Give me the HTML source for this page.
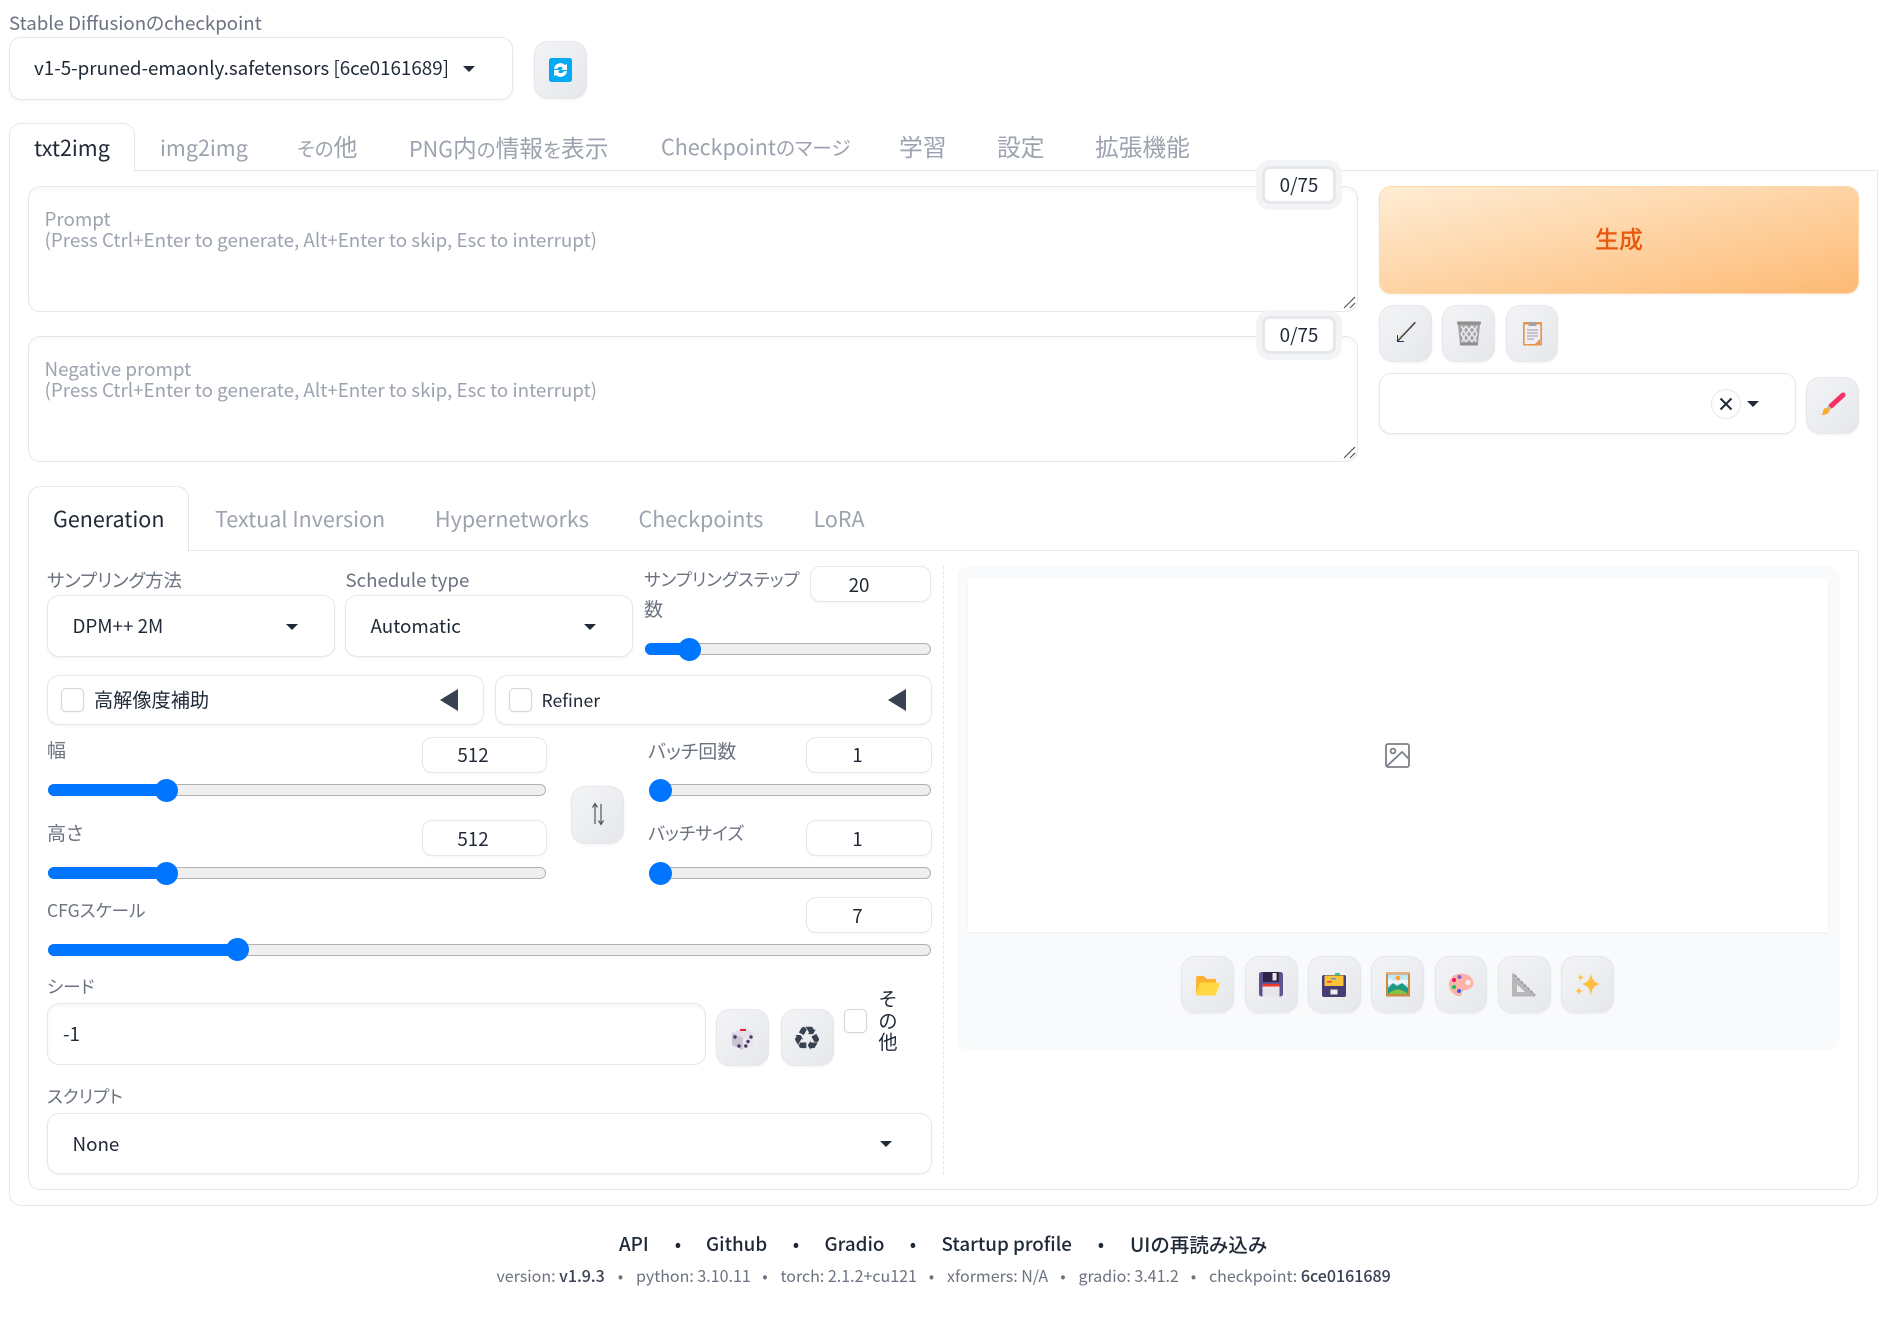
<!DOCTYPE html>
<html lang="ja"><head><meta charset="utf-8"><title>Stable Diffusion</title>
<style>
html,body{margin:0;padding:0;background:#fff}
body{position:relative;width:1884px;height:1323px;overflow:hidden;font-family:"Noto Sans CJK JP","Liberation Sans",sans-serif;color:#1f2937;font-feature-settings:"palt"}
.a{position:absolute;box-sizing:border-box}
.t{position:absolute;white-space:nowrap;line-height:24px;height:24px;font-size:18.8px}
.l{font-size:18.7px;color:#6b7280}
.tab{font-size:21.5px;color:#9ca3af}
.tab i{font-style:normal;font-size:23.7px}
.tab u{text-decoration:none;font-size:19.6px}
.ph{font-size:18.8px;color:#9ca3af;line-height:21.5px;height:auto}
.c{transform:translateX(-50%)}
.b{position:absolute;box-sizing:border-box;background:#fff;border:1.2px solid #e5e7eb;border-radius:12px;box-shadow:0 1px 2px rgba(0,0,0,.05)}
.n{position:absolute;box-sizing:border-box;background:#fff;border:1.2px solid #e5e7eb;border-radius:10px;box-shadow:0 1px 2px rgba(0,0,0,.04)}
.btn{position:absolute;box-sizing:border-box;background:linear-gradient(to bottom right,#f3f4f6,#e5e7eb);border:1.2px solid #e5e7eb;border-radius:14px;box-shadow:0 1px 2px rgba(0,0,0,.05)}
.tr{position:absolute;height:11.5px;box-sizing:border-box;background:#efefef;border:1.2px solid #b2b2b2;border-radius:6px}
.fi{position:absolute;height:11.5px;background:#0075ff;border-radius:6px 0 0 6px}
.th{position:absolute;width:23px;height:23px;background:#0075ff;border-radius:50%}
.ar{position:absolute;width:0;height:0;border-left:6px solid transparent;border-right:6px solid transparent;border-top:6.5px solid #1f2937}
.cb{position:absolute;box-sizing:border-box;background:#fff;border:1.2px solid #d1d5db;border-radius:5px;box-shadow:0 1px 2px rgba(0,0,0,.05)}
.tri{position:absolute;width:0;height:0;border-top:11px solid transparent;border-bottom:11px solid transparent;border-right:18px solid #374151}
svg{position:absolute;overflow:visible}
.cnt{position:absolute;box-sizing:border-box;background:#fff;border:3.6px solid #e5e7eb;border-radius:8px;box-shadow:0 0 0 6px #f3f4f6;text-align:center;font-size:18.8px;line-height:32px;color:#1f2937}
</style></head><body>

<div class="t l" style="left:9px;top:10.500px">Stable Diffusionのcheckpoint</div>
<div class="b" style="left:8.8px;top:37px;width:504.600px;height:63px"></div>
<div class="t" style="left:34px;top:55.500px">v1-5-pruned-emaonly.safetensors [6ce0161689]</div>
<div class="ar" style="left:463px;top:66px"></div>
<div class="btn" style="left:534px;top:41px;width:53px;height:58px"></div>
<svg style="left:549px;top:58px" width="23" height="24" viewBox="0 0 23 24"><rect width="23" height="24" rx="2.500" fill="#03a9f4"/><path d="M5 11a6.500 6.500 0 0 1 11-4l2-1v6h-6l2-2a3.700 3.700 0 0 0-6 1z" fill="#fff"/><path d="M18 13a6.500 6.500 0 0 1-11 4l-2 1v-6h6l-2 2a3.700 3.700 0 0 0 6-1z" fill="#fff"/></svg>

<!-- main tabs -->
<div class="a" style="left:8.600px;top:170.200px;width:1869px;height:1035.800px;border:1.200px solid #e5e7eb;border-radius:0 0 12px 12px"></div>
<div class="a" style="left:8.600px;top:123px;width:126px;height:49px;background:#fff;border:1.200px solid #e5e7eb;border-bottom:0;border-radius:12px 12px 0 0"></div>
<div class="t tab" style="left:34px;top:136px;color:#1f2937">txt2img</div>
<div class="t tab" style="left:160px;top:136px">img2img</div>
<div class="t tab" style="left:297px;top:134px"><u>その</u><i>他</i></div>
<div class="t tab" style="left:409px;top:135px">PNG<i>内</i><u>の</u><i>情報</i><u>を</u><i>表示</i></div>
<div class="t tab" style="left:661px;top:135px">Checkpoint<u>のマージ</u></div>
<div class="t tab" style="left:899px;top:134px"><i>学習</i></div>
<div class="t tab" style="left:997px;top:134px"><i>設定</i></div>
<div class="t tab" style="left:1095px;top:134px"><i>拡張機能</i></div>

<!-- prompts -->
<div class="b" style="left:28.200px;top:186px;width:1329.600px;height:126px;box-shadow:inset 0 3px 4px rgba(0,0,0,.03)"></div>
<div class="t ph" style="left:44.500px;top:207.500px">Prompt<br>(Press Ctrl+Enter to generate, Alt+Enter to skip, Esc to interrupt)</div>
<svg style="left:1343px;top:296px" width="14" height="14"><path d="M1 12L12 1M7 12l5-5" stroke="#555" stroke-width="1.200" fill="none"/></svg>
<div class="cnt" style="left:1262px;top:166px;width:74px;height:38px">0/75</div>

<div class="b" style="left:28.200px;top:336px;width:1329.600px;height:126px;box-shadow:inset 0 3px 4px rgba(0,0,0,.03)"></div>
<div class="t ph" style="left:44.500px;top:357.500px">Negative prompt<br>(Press Ctrl+Enter to generate, Alt+Enter to skip, Esc to interrupt)</div>
<svg style="left:1343px;top:446px" width="14" height="14"><path d="M1 12L12 1M7 12l5-5" stroke="#555" stroke-width="1.200" fill="none"/></svg>
<div class="cnt" style="left:1262px;top:316px;width:74px;height:38px">0/75</div>

<!-- generate -->
<div class="a" style="left:1379px;top:186px;width:480px;height:108px;border-radius:12px;background:linear-gradient(to bottom right,#ffedd5,#fdba74);border:1.200px solid #fed7aa;box-shadow:0 1px 2px rgba(0,0,0,.05)"></div>
<div class="t c" style="left:1619px;top:226px;font-size:24px;font-weight:500;color:#ea580c">生成</div>

<div class="btn" style="left:1379px;top:305px;width:53px;height:57px"></div>
<svg style="left:1393px;top:319px" width="26" height="26" viewBox="0 0 26 26"><path d="M22 3L4 22" stroke="#b87a3a" stroke-width="1.100"/><path d="M22.500 3.500L4.500 22.500M4.500 16V22.500h6.500" stroke="#1e3a5f" stroke-width="1" fill="none"/></svg>
<div class="btn" style="left:1442px;top:305px;width:53px;height:57px"></div>
<svg style="left:1457px;top:321px" width="24" height="25" viewBox="0 0 24 25"><path d="M1 2h22v2l-2 19H3L1 4z" fill="#a3a3a3"/><path d="M4 5l3 4-3 4 3 4-2 4M9 5L6 9l3 4-3 4 3 4M9 5l3 4-3 4 3 4-3 4M15 5l-3 4 3 4-3 4 3 4M15 5l3 4-3 4 3 4-3 4M20 5l-2 4 2 4-2 4 1 4" stroke="#e6e7ea" stroke-width="1.600" fill="none"/><rect x="0" y="0.500" width="24" height="3" fill="#8f8f8f" rx="1"/><rect x="3" y="21.500" width="18" height="3" fill="#8f8f8f" rx="1"/></svg>
<div class="btn" style="left:1506px;top:305px;width:52px;height:57px"></div>
<svg style="left:1523px;top:322px" width="19" height="24" viewBox="0 0 19 24"><rect width="19" height="23.500" rx="1" fill="#e8954a"/><rect x="1.700" y="2.500" width="15.600" height="19.500" fill="#f1edf4"/><path d="M4 8h11M4 11h11M4 14h11M4 17h7" stroke="#9b95a8" stroke-width="1"/><rect x="5.500" y="0" width="8" height="4" fill="#a3a3a3"/><path d="M12 22l5-5v5z" fill="#e8954a"/></svg>

<div class="b" style="left:1379px;top:373px;width:416.500px;height:60.500px"></div>
<div class="a" style="left:1711px;top:389px;width:30px;height:30px;border:1.200px solid #e5e7eb;border-radius:50%;background:#fff"></div>
<svg style="left:1719px;top:397px" width="14" height="14"><path d="M1.500 1.500l11 11M12.500 1.500l-11 11" stroke="#1f2937" stroke-width="2" fill="none"/></svg>
<div class="ar" style="left:1747px;top:401px"></div>
<div class="btn" style="left:1806px;top:377px;width:53px;height:57px"></div>
<svg style="left:1820px;top:392px" width="26" height="26" viewBox="0 0 26 26"><path d="M23 3L11 14" stroke="#f43064" stroke-width="5" stroke-linecap="round"/><path d="M10 15l-2 2" stroke="#c9b9a8" stroke-width="4"/><path d="M6 16c3 0 4 2 3 4-1 2-4 3-8 3 2-1 2-3 2-4s1-3 3-3z" fill="#f9ac2e"/></svg>

<!-- generation tabs -->
<div class="a" style="left:28px;top:550.300px;width:1830.500px;height:639.800px;border:1.200px solid #e5e7eb;border-radius:0 0 12px 12px"></div>
<div class="a" style="left:28px;top:486px;width:161px;height:65.500px;background:#fff;border:1.200px solid #e5e7eb;border-bottom:0;border-radius:12px 12px 0 0"></div>
<div class="t tab" style="left:53px;top:506.500px;color:#1f2937">Generation</div>
<div class="t tab" style="left:215px;top:506.500px">Textual Inversion</div>
<div class="t tab" style="left:435px;top:506.500px">Hypernetworks</div>
<div class="t tab" style="left:638.500px;top:506.500px">Checkpoints</div>
<div class="t tab" style="left:813.500px;top:506.500px">LoRA</div>

<div class="t l" style="left:47px;top:567.500px;font-size:18.400px">サンプリング方法</div>
<div class="t l" style="left:345.500px;top:568px">Schedule type</div>
<div class="b" style="left:46.700px;top:595px;width:288px;height:62px"></div>
<div class="b" style="left:345px;top:595px;width:288px;height:62px"></div>
<div class="t" style="left:72.500px;top:613.500px">DPM++ 2M</div>
<div class="t" style="left:370.500px;top:613.500px">Automatic</div>
<div class="ar" style="left:286px;top:624px"></div>
<div class="ar" style="left:584px;top:624px"></div>

<div class="t l" style="left:644px;top:567.500px;font-size:17.600px">サンプリングステップ</div>
<div class="t l" style="left:644px;top:597px;font-size:19px">数</div>
<div class="n" style="left:809.500px;top:566px;width:121.500px;height:35.500px"></div>
<div class="t c" style="left:859px;top:572.500px">20</div>
<div class="tr" style="left:645px;top:643.300px;width:285.500px"></div><div class="fi" style="left:645px;top:643.300px;width:44px"></div><div class="th" style="left:677.500px;top:637.500px"></div>

<div class="b" style="left:46.700px;top:675px;width:437px;height:50px"></div>
<div class="cb" style="left:60.500px;top:688px;width:23px;height:24px"></div>
<div class="t" style="left:94px;top:687px;font-size:19.200px">高解像度補助</div>
<div class="tri" style="left:440px;top:689px"></div>
<div class="b" style="left:495px;top:675px;width:437px;height:50px"></div>
<div class="cb" style="left:508.500px;top:688px;width:23px;height:24px"></div>
<div class="t" style="left:541.500px;top:688.500px;font-size:17.600px">Refiner</div>
<div class="tri" style="left:888px;top:689px"></div>

<div class="t l" style="left:47px;top:738px;font-size:19px">幅</div>
<div class="n" style="left:421.500px;top:737px;width:125px;height:35.500px"></div>
<div class="t c" style="left:473px;top:742.500px">512</div>
<div class="tr" style="left:48px;top:784.300px;width:498px"></div><div class="fi" style="left:48px;top:784.300px;width:119px"></div><div class="th" style="left:155px;top:778.500px"></div>

<div class="t l" style="left:47px;top:821px;font-size:19px">高さ</div>
<div class="n" style="left:421.500px;top:820px;width:125px;height:35.500px"></div>
<div class="t c" style="left:473px;top:826.500px">512</div>
<div class="tr" style="left:48px;top:867.300px;width:498px"></div><div class="fi" style="left:48px;top:867.300px;width:119px"></div><div class="th" style="left:155px;top:861.500px"></div>

<div class="btn" style="left:571px;top:786px;width:53px;height:58px"></div>
<svg style="left:589.500px;top:802px" width="16" height="24" viewBox="0 0 16 24"><path d="M5 22V2M2.500 5.500L5 1.500 7.500 5.500" stroke="#4a5a5a" stroke-width="1.200" fill="none"/><path d="M11 2v20M8.500 18.500l2.500 4 2.500-4" stroke="#4a5a5a" stroke-width="1.200" fill="none"/></svg>

<div class="t l" style="left:648px;top:738.500px;font-size:19px">バッチ回数</div>
<div class="n" style="left:805.500px;top:737px;width:126.500px;height:35.500px"></div>
<div class="t c" style="left:857.500px;top:742.500px">1</div>
<div class="tr" style="left:649px;top:784.300px;width:282px"></div><div class="fi" style="left:649px;top:784.300px;width:11px"></div><div class="th" style="left:648.500px;top:778.500px"></div>

<div class="t l" style="left:648px;top:821px;font-size:17.900px">バッチサイズ</div>
<div class="n" style="left:805.500px;top:820px;width:126.500px;height:35.500px"></div>
<div class="t c" style="left:857.500px;top:826.500px">1</div>
<div class="tr" style="left:649px;top:867.300px;width:282px"></div><div class="fi" style="left:649px;top:867.300px;width:11px"></div><div class="th" style="left:648.500px;top:861.500px"></div>

<div class="t l" style="left:47px;top:899px;font-size:17.500px">CFGスケール</div>
<div class="n" style="left:805.500px;top:897px;width:126.500px;height:35.500px"></div>
<div class="t c" style="left:857.500px;top:903.500px">7</div>
<div class="tr" style="left:48px;top:944px;width:883px"></div><div class="fi" style="left:48px;top:944px;width:190px"></div><div class="th" style="left:225.500px;top:938.200px"></div>

<div class="t l" style="left:47px;top:975px;font-size:17.600px">シード</div>
<div class="b" style="left:46.700px;top:1003px;width:659.500px;height:62px;box-shadow:inset 0 3px 4px rgba(0,0,0,.03)"></div>
<div class="t" style="left:63px;top:1022px">-1</div>
<div class="btn" style="left:716px;top:1009px;width:53px;height:57px"></div>
<svg style="left:731px;top:1027px" width="24" height="24" viewBox="0 0 24 24"><path d="M1 6l11-5 11 5v12l-11 5-11-5z" fill="#e3dfe8"/><path d="M12 11v12L1 18V6z" fill="#c9c3d2"/><path d="M12 11v12l11-5V6z" fill="#e8e5ec"/><path d="M9 3h6" stroke="#e8242e" stroke-width="2"/><circle cx="20" cy="10" r="1.700" fill="#433b69"/><circle cx="17" cy="14.500" r="1.700" fill="#433b69"/><circle cx="14.800" cy="19" r="1.700" fill="#433b69"/><circle cx="4" cy="10" r="1.700" fill="#433b69"/><circle cx="8" cy="19" r="1.700" fill="#433b69"/></svg>
<div class="btn" style="left:780.500px;top:1009px;width:53px;height:57px"></div>
<div class="a" style="left:780.500px;top:1020.500px;width:53px;height:36px;line-height:36px;text-align:center;font-family:'DejaVu Sans',sans-serif;font-size:33px;color:#374151;font-feature-settings:normal">♻&#xFE0E;</div>
<div class="cb" style="left:843.700px;top:1009px;width:23px;height:24px"></div>
<div class="t" style="left:878px;top:988px;width:20px;text-align:center;line-height:21.700px;height:auto;white-space:normal;color:#1f2937;font-size:19.200px;font-feature-settings:normal">その他</div>

<div class="t l" style="left:47px;top:1084.500px;font-size:17.600px">スクリプト</div>
<div class="b" style="left:46.700px;top:1113px;width:885px;height:61px"></div>
<div class="t" style="left:72.500px;top:1131.500px">None</div>
<div class="ar" style="left:880px;top:1141px"></div>

<!-- divider -->
<div class="a" style="left:943px;top:566px;width:0;height:608px;border-left:1.200px dashed #e5e7eb"></div>

<!-- gallery -->
<div class="a" style="left:956.500px;top:566px;width:883.500px;height:484.700px;background:#f9fafb;border-radius:12px"></div>
<div class="a" style="left:968px;top:578px;width:860px;height:354px;background:#fff;box-shadow:0 1px 2px rgba(0,0,0,.05)"></div>
<svg style="left:1385px;top:743px" width="25" height="25" viewBox="0 0 25 25" fill="none" stroke="#7b8088" stroke-width="1.800"><rect x="1" y="1" width="23" height="23" rx="2"/><circle cx="8" cy="8" r="2.400"/><path d="M2 23L17 9l7 7"/></svg>

<div class="btn" style="left:1181.300px;top:956px;width:52.500px;height:57px"></div>
<svg style="left:1196px;top:976px" width="24" height="20" viewBox="0 0 25 21"><path d="M0 2a2 2 0 0 1 2-2h6l3 3h8a2 2 0 0 1 2 2v5H4L0 19z" fill="#fdb12e"/><path d="M5 7h18c1.500 0 2 .8 1.600 2L21 19c-.4 1-1 1.500-2 1.500H2c-1.500 0-2-.8-1.600-2L3.500 8c.3-.7.800-1 1.500-1z" fill="#ffd941"/></svg>
<div class="btn" style="left:1245.300px;top:956px;width:52.500px;height:57px"></div>
<svg style="left:1259px;top:972px" width="24" height="25" viewBox="0 0 24 25"><rect width="24" height="24.500" rx="2.500" fill="#5f5290"/><rect x="4" y="0" width="16" height="10" fill="#2e2147"/><rect x="13.500" y="1" width="4" height="7.500" fill="#e6e6e6"/><rect x="3.500" y="12" width="17" height="12.500" fill="#e6e6ea"/><rect x="3.500" y="12" width="17" height="2.500" fill="#f0382f"/></svg>
<div class="btn" style="left:1308.300px;top:956px;width:52.500px;height:57px"></div>
<svg style="left:1322px;top:973px" width="24" height="24" viewBox="0 0 24 24"><rect x="13" y="0" width="5" height="3" fill="#1cd886"/><rect y="2" width="24" height="22" rx="2" fill="#483d73"/><rect x="2.500" y="2.500" width="19" height="10.500" fill="#fcc23c"/><rect x="9" y="5" width="5" height="1.500" fill="#3aa3e8"/><rect x="5" y="8" width="5" height="1.500" fill="#e8442e"/><rect x="8.500" y="16.500" width="7" height="5" fill="#eeeeee"/></svg>
<div class="btn" style="left:1371.300px;top:956px;width:52.500px;height:57px"></div>
<svg style="left:1385.500px;top:972px" width="24" height="25" viewBox="0 0 24 25"><rect width="24" height="24.500" fill="#c98a46"/><rect x="0" y="0" width="24" height="2" fill="#e6b184"/><rect x="2" y="2.500" width="20" height="19.500" fill="#bfe8f8"/><path d="M2 6l6 3 3-2 11 1v4H2z" fill="#eef8fc"/><circle cx="12" cy="6" r="2.400" fill="#fca72c"/><path d="M2 16l5-5 4 3 5-3 6 5v6H2z" fill="#1d9a82"/><path d="M2 22c3-3 8-4.500 10-4.500s7 1.500 10 4.500z" fill="#8bbf3f"/></svg>
<div class="btn" style="left:1435.300px;top:956px;width:51.500px;height:57px"></div>
<svg style="left:1449px;top:973px" width="25" height="23" viewBox="0 0 25 23"><path d="M12 .5C5 .5 0 5.500 0 11.500S5 23 10 23c2 0 3-1 3-3s1.500-2.500 4-3 7.500-2 7.500-7S19 .5 12 .5z" fill="#fdb4a8"/><circle cx="19" cy="9.500" r="2.600" fill="#fbeeea"/><circle cx="10.500" cy="4" r="2" fill="#8a5bc8"/><circle cx="5" cy="7" r="2" fill="#f0146e"/><circle cx="5" cy="14" r="2" fill="#16c060"/><circle cx="10" cy="18" r="2" fill="#3a5cf0"/></svg>
<div class="btn" style="left:1498.300px;top:956px;width:52.500px;height:57px"></div>
<svg style="left:1512px;top:973px" width="24" height="24" viewBox="0 0 24 24"><path fill-rule="evenodd" d="M0 1l1.500-1L23.500 21.500 23 23.500H0zM5 11.500V19h8z" fill="#b7b7b7"/><path d="M3 2.500L23 22" stroke="#8878ad" stroke-width="1.400" stroke-dasharray="1.500 3"/></svg>
<div class="btn" style="left:1561.300px;top:956px;width:52.500px;height:57px"></div>
<svg style="left:1575px;top:973px" width="25" height="24" viewBox="0 0 25 24" fill="#fdbd3d"><path d="M16 0c.8 6 2.500 9 9 11-6.500 2-8.200 5-9 12-.8-7-2.500-10-9-12 6.500-2 8.200-5 9-11z"/><path d="M5.500 1c.3 2 1 3 3 3.500-2 .5-2.700 1.500-3 3.500-.3-2-1-3-3-3.500 2-.5 2.700-1.500 3-3.500z"/><path d="M4 14c.4 2.400 1.200 3.400 4 4-2.800.6-3.600 1.600-4 4-.4-2.400-1.200-3.400-4-4 2.800-.6 3.600-1.600 4-4z"/></svg>

<!-- footer -->
<div class="t" style="left:619px;top:1232px;font-weight:500;color:#1f2937">API</div>
<div class="t c" style="left:678px;top:1232px">•</div>
<div class="t" style="left:706px;top:1232px;font-weight:500;color:#1f2937">Github</div>
<div class="t c" style="left:796px;top:1232px">•</div>
<div class="t" style="left:824.500px;top:1232px;font-weight:500;color:#1f2937">Gradio</div>
<div class="t c" style="left:913px;top:1232px">•</div>
<div class="t" style="left:941.500px;top:1232px;font-weight:500;color:#1f2937">Startup profile</div>
<div class="t c" style="left:1101px;top:1232px">•</div>
<div class="t" style="left:1130px;top:1232px;font-weight:500;color:#1f2937;font-size:19.500px;font-feature-settings:normal">UIの再読み込み</div>

<div class="t" style="left:496.500px;top:1263px;font-size:16px;color:#6b7280">version: <b style="font-weight:500;color:#374151">v1.9.3</b></div>
<div class="t c" style="left:620.500px;top:1263px;font-size:16px;color:#6b7280">•</div>
<div class="t" style="left:636px;top:1263px;font-size:16px;color:#6b7280">python: 3.10.11</div>
<div class="t c" style="left:765px;top:1263px;font-size:16px;color:#6b7280">•</div>
<div class="t" style="left:780.500px;top:1263px;font-size:16px;color:#6b7280">torch: 2.1.2+cu121</div>
<div class="t c" style="left:931.500px;top:1263px;font-size:16px;color:#6b7280">•</div>
<div class="t" style="left:947px;top:1263px;font-size:16px;color:#6b7280">xformers: N/A</div>
<div class="t c" style="left:1063px;top:1263px;font-size:16px;color:#6b7280">•</div>
<div class="t" style="left:1078.500px;top:1263px;font-size:16px;color:#6b7280">gradio: 3.41.2</div>
<div class="t c" style="left:1193.500px;top:1263px;font-size:16px;color:#6b7280">•</div>
<div class="t" style="left:1209px;top:1263px;font-size:16px;color:#6b7280">checkpoint: <b style="font-weight:500;color:#374151">6ce0161689</b></div>
</body></html>
